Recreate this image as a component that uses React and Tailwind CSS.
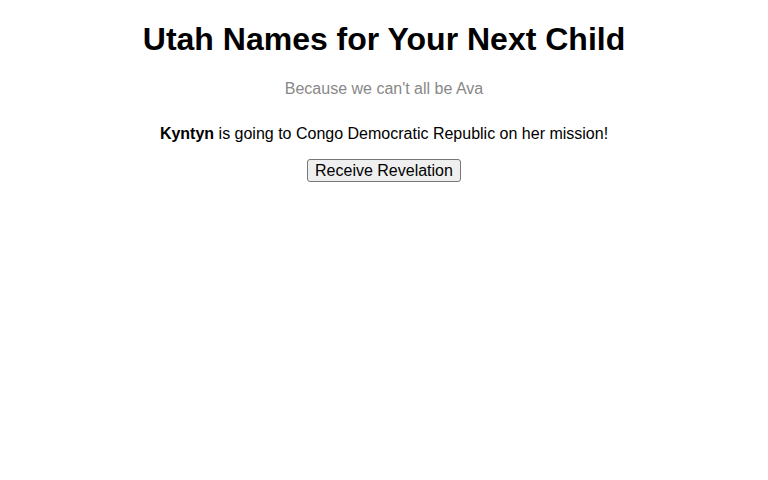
export default function App() {
  return (
    <div className="min-h-screen bg-white font-['Liberation_Sans',Arial,sans-serif] text-black">
      <div className="flex flex-col items-center text-center">
        <h1 className="mt-[21px] text-[32px] font-bold leading-[37px]">Utah Names for Your Next Child</h1>
        <p className="mt-[22px] text-[16px] leading-[18px] text-[#888888]">Because we can't all be Ava</p>
        <p className="mt-[27px] text-[16px] leading-[18px]">
          <span className="font-bold">Kyntyn</span> is going to Congo Democratic Republic on her mission!
        </p>
        <button className="mt-[16px] h-[23px] rounded-[3px] border border-[#767676] bg-[#efefef] px-[7px] text-[16px] leading-[19px] text-black">
          Receive Revelation
        </button>
      </div>
    </div>
  );
}
